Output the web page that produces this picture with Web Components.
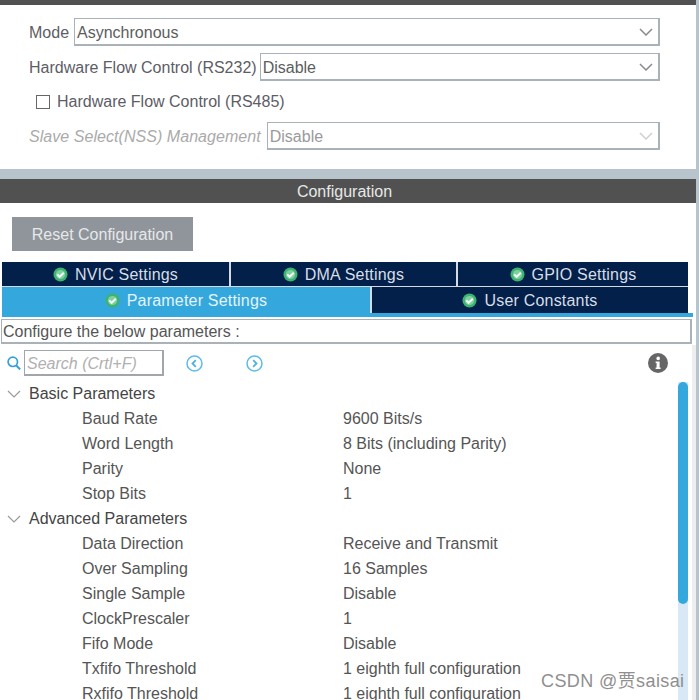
<!DOCTYPE html>
<html>
<head>
<meta charset="utf-8">
<style>
  html, body { margin: 0; padding: 0; height: 700px; overflow: hidden; background: #fff; }
  body { font-family: "Liberation Sans", Roboto, sans-serif; font-size: 16px; color: #555; }
</style>
</head>
<body>
<uart-app></uart-app>
<script>
const CHECK = `<svg width="15" height="15" viewBox="0 0 15 15"><circle cx="7.5" cy="7.5" r="7" fill="#3cb371"/><circle cx="7.5" cy="7.5" r="4.6" fill="#7fd0a0"/><path d="M4.2 7.4l2.4 2.4 4.2-4" fill="none" stroke="#f4fbf6" stroke-width="2"/></svg>`;

class MxSelect extends HTMLElement {
  constructor() {
    super();
    this.attachShadow({ mode: 'open' });
    const off = this.hasAttribute('disabled');
    this.shadowRoot.innerHTML = `
      <style>
        :host { display: flex; flex: 1; height: 28px; box-sizing: border-box; border: 2px solid #a9b2b8; border-width: 1px 2px 2px 1px; background: #fff; align-items: center; padding: 0 5px 0 2px; justify-content: space-between; color: ${off ? '#9a9a9a' : '#5d5d5d'}; }
        span { display: block; margin-top: 2px; }
        svg { display: block; }
      </style>
      <span><slot></slot></span>
      <svg width="14" height="8" viewBox="0 0 14 8"><path d="M1 1l6 6 6-6" fill="none" stroke="${off ? '#cfcfcf' : '#8a8a8a'}" stroke-width="1.5"/></svg>`;
  }
}
customElements.define('mx-select', MxSelect);

class MxField extends HTMLElement {
  constructor() {
    super();
    this.attachShadow({ mode: 'open' });
    const off = this.hasAttribute('disabled');
    const gap = this.getAttribute('gap') || 5;
    this.shadowRoot.innerHTML = `
      <style>
        :host { display: flex; align-items: center; gap: ${gap}px; height: 28px; }
        .l { display: block; margin-top: 2px; white-space: nowrap; color: ${off ? '#aaa' : '#5d5d66'}; font-style: ${off ? 'italic' : 'normal'}; letter-spacing: ${off ? '.05px' : '0'}; }
      </style>
      <span class="l">${this.getAttribute('label')}</span>
      <mx-select ${off ? 'disabled' : ''}><slot></slot></mx-select>`;
  }
}
customElements.define('mx-field', MxField);

class MxCheck extends HTMLElement {
  constructor() {
    super();
    this.attachShadow({ mode: 'open' });
    this.shadowRoot.innerHTML = `
      <style>
        :host { display: flex; align-items: center; gap: 7px; height: 28px; padding-left: 7px; color: #5d5d66; }
        i { display: block; width: 14px; height: 14px; box-sizing: border-box; border: 1.5px solid #666; }
      </style>
      <i></i><span><slot></slot></span>`;
  }
}
customElements.define('mx-check', MxCheck);

class MxTab extends HTMLElement {
  constructor() {
    super();
    this.attachShadow({ mode: 'open' });
    const on = this.hasAttribute('active');
    this.shadowRoot.innerHTML = `
      <style>
        :host { display: flex; align-items: center; justify-content: center; gap: 7px; background: ${on ? '#34a8dc' : '#022049'}; color: ${on ? '#e4f3fb' : '#d8dde6'}; letter-spacing: .2px; }
        span { display: block; margin-top: 2px; }
        svg { display: block; }
      </style>
      ${CHECK}<span><slot></slot></span>`;
  }
}
customElements.define('mx-tab', MxTab);

class MxRow extends HTMLElement {
  constructor() {
    super();
    this.attachShadow({ mode: 'open' });
    const group = this.hasAttribute('group');
    const arrow = `<svg width="14" height="8" viewBox="0 0 14 8"><path d="M1 1l6 6 6-6" fill="none" stroke="#9a9a9a" stroke-width="1.2"/></svg>`;
    this.shadowRoot.innerHTML = `
      <style>
        :host { display: grid; grid-template-columns: ${group ? '22px 1fr' : '261px 1fr'}; padding-left: ${group ? '7px' : '82px'}; height: 25px; align-items: center; color: #555; white-space: nowrap; }
        :host([group]) { color: #444; }
        svg { display: block; }
      </style>
      ${group ? arrow + '<span><slot name="k"></slot></span>' : '<span><slot name="k"></slot></span><span><slot name="v"></slot></span>'}`;
  }
}
customElements.define('mx-row', MxRow);

class MxToolbar extends HTMLElement {
  constructor() {
    super();
    this.attachShadow({ mode: 'open' });
    const round = d => `<svg width="17" height="17" viewBox="0 0 17 17"><circle cx="8.5" cy="8.5" r="7.5" fill="none" stroke="#5cbce8" stroke-width="1.5"/><path d="${d}" fill="none" stroke="#4cb2e2" stroke-width="1.8"/></svg>`;
    this.shadowRoot.innerHTML = `
      <style>
        :host { display: flex; align-items: center; height: 26px; margin-top: 6px; padding-left: 7px; }
        .s { display: flex; align-items: center; width: 140px; height: 26px; box-sizing: border-box; margin-left: 3px; border: 2px solid #a0a6ab; border-width: 1px 2px 2px 1px; padding: 2px 0 0 2px; color: #b0b0b0; font-style: italic; }
        .a { margin-left: 22px; display: block; }
        .b { margin-left: 43px; display: block; }
        .i { margin-left: auto; margin-right: 28px; display: block; }
        svg { display: block; }
      </style>
      <svg width="14" height="14" viewBox="0 0 14 14"><circle cx="5.8" cy="5.8" r="4.7" fill="none" stroke="#34a0d8" stroke-width="1.7"/><path d="M9 9.2l4.2 4.2" stroke="#34a0d8" stroke-width="2"/></svg>
      <div class="s">Search (Crtl+F)</div>
      <span class="a">${round('M9.8 5.2L6.5 8.5l3.3 3.3')}</span>
      <span class="b">${round('M7.2 5.2l3.3 3.3-3.3 3.3')}</span>
      <svg class="i" width="20" height="20" viewBox="0 0 20 20"><circle cx="10" cy="10" r="10" fill="#666"/><circle cx="10.2" cy="5.4" r="1.8" fill="#fff"/><path d="M7.6 8.4h4v6h1v1.6H7.6v-1.6h1v-4.4h-1z" fill="#fff"/></svg>`;
  }
}
customElements.define('mx-toolbar', MxToolbar);

class UartApp extends HTMLElement {
  constructor() {
    super();
    this.attachShadow({ mode: 'open' });
    this.shadowRoot.innerHTML = `
      <style>
        :host { display: block; height: 700px; position: relative; overflow: hidden; background: #fff; border-right: 3px solid #b8c4cc; width: 696px; }
        .top { height: 5px; background: #505150; }
        .mode { display: flex; flex-direction: column; gap: 7px; padding: 13px 36px 19px 29px; height: 132px; }
        .sep { height: 10px; background: #b8c4cc; }
        .head { height: 24px; background: #505150; color: #e8e8e8; display: flex; align-items: center; justify-content: center; padding: 2px 7px 0 0; box-sizing: border-box; }
        .reset { margin: 14px 0 0 12px; width: 181px; height: 34px; box-sizing: border-box; padding-top: 2px; background: #8f959a; color: #e6e8ea; display: flex; align-items: center; justify-content: center; }
        .tabs { margin: 11px 0 0 2px; width: 686px; display: flex; flex-direction: column; gap: 1px; background: #d4dae0; }
        .r1 { display: grid; grid-template-columns: 227px 225px 1fr; gap: 2px; height: 24px; }
        .r2 { display: grid; grid-template-columns: 368px 1fr; gap: 2px; height: 26px; }
        .line { height: 4px; background: #34a8dc; width: 691px; margin-left: 2px; }
        .cfg { margin: 2px 4px 0 1px; height: 25px; box-sizing: border-box; border: 2px solid #a9b2b8; border-width: 1px 2px 2px 1px; display: flex; align-items: center; padding: 2px 0 0 1px; color: #555; }
        .tree { margin-top: 5px; }
        .bar { position: absolute; left: 678px; top: 382px; width: 10px; height: 318px; background: #d9e8f5; }
        .thumb { height: 222px; background: #34a8dc; border-radius: 5px; }
        .edge { position: absolute; left: 692px; top: 345px; width: 4px; height: 355px; background: #eceeef; }
        .mark { position: absolute; left: 541px; top: 666px; font: 18px "Liberation Sans", "Noto Sans CJK SC", sans-serif; letter-spacing: .4px; color: #8f8f8f; white-space: nowrap; }
      </style>
      <div class="top"></div>
      <div class="mode">
        <mx-field label="Mode">Asynchronous</mx-field>
        <mx-field label="Hardware Flow Control (RS232)" gap="3">Disable</mx-field>
        <mx-check>Hardware Flow Control (RS485)</mx-check>
        <mx-field label="Slave Select(NSS) Management" gap="6" disabled>Disable</mx-field>
      </div>
      <div class="sep"></div>
      <div class="head">Configuration</div>
      <div class="reset">Reset Configuration</div>
      <div class="tabs">
        <div class="r1"><mx-tab>NVIC Settings</mx-tab><mx-tab>DMA Settings</mx-tab><mx-tab>GPIO Settings</mx-tab></div>
        <div class="r2"><mx-tab active>Parameter Settings</mx-tab><mx-tab>User Constants</mx-tab></div>
      </div>
      <div class="line"></div>
      <div class="cfg">Configure the below parameters :</div>
      <mx-toolbar></mx-toolbar>
      <div class="tree" id="tree"></div>
      <div class="bar"><div class="thumb"></div></div>
      <div class="edge"></div>
      <div class="mark">CSDN @贾saisai</div>`;
    const rows = [
      ['Basic Parameters'],
      ['Baud Rate', '9600 Bits/s'],
      ['Word Length', '8 Bits (including Parity)'],
      ['Parity', 'None'],
      ['Stop Bits', '1'],
      ['Advanced Parameters'],
      ['Data Direction', 'Receive and Transmit'],
      ['Over Sampling', '16 Samples'],
      ['Single Sample', 'Disable'],
      ['ClockPrescaler', '1'],
      ['Fifo Mode', 'Disable'],
      ['Txfifo Threshold', '1 eighth full configuration'],
      ['Rxfifo Threshold', '1 eighth full configuration']
    ];
    const tree = this.shadowRoot.getElementById('tree');
    tree.innerHTML = rows.map(r => r.length === 1
      ? `<mx-row group><span slot="k">${r[0]}</span></mx-row>`
      : `<mx-row><span slot="k">${r[0]}</span><span slot="v">${r[1]}</span></mx-row>`).join('');
  }
}
customElements.define('uart-app', UartApp);
</script>
</body>
</html>
